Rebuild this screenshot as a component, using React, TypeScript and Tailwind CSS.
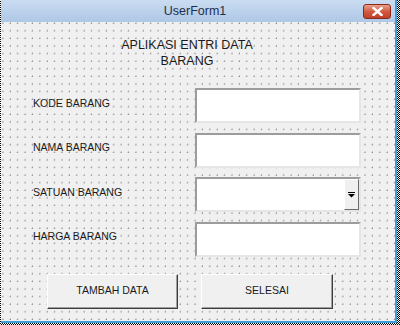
import React from 'react';

const font = { fontFamily: '"Liberation Sans", Arial, sans-serif' };

function TextBox({ combo = false }: { combo?: boolean }) {
  return (
    <div className="flex h-[35px] w-[166px] border-2 border-t-[#9c9c9c] border-l-[#9c9c9c] border-b-[#e6e6e6] border-r-[#e6e6e6] bg-white">
      <div className="flex-1" />
      {combo && (
        <div className="flex w-[15px] items-center justify-center border border-t-white border-l-white border-b-[#6b6b6b] border-r-[#6b6b6b] bg-[#f0f0f0]">
          <svg width="7" height="6" viewBox="0 0 7 6">
            <rect x="0" y="0" width="7" height="1" fill="#000" />
            <polygon points="0,2 7,2 3.5,5.5" fill="#000" />
          </svg>
        </div>
      )}
    </div>
  );
}

function Field({ label, combo }: { label: string; combo?: boolean }) {
  return (
    <div className="flex h-[35px] items-center">
      <div className="w-[194px] pl-[32px] pb-[4px] text-[10.5px] text-[#1a1a1a]">{label}</div>
      <TextBox combo={combo} />
    </div>
  );
}

function FormButton({ children, className }: { children: React.ReactNode; className?: string }) {
  return (
    <div
      className={`flex h-[35px] items-center justify-center border border-t-white border-l-white border-b-[#3c3c3c] border-r-[#3c3c3c] bg-[#f0f0f0] text-[10.5px] text-[#1a1a1a] shadow-[inset_-1px_-1px_0_#a0a0a0] ${className ?? ''}`}
    >
      {children}
    </div>
  );
}

export default function App() {
  return (
    <div
      className="flex h-[325px] w-[400px] bg-[repeating-conic-gradient(#000_0_25%,#fff_0_50%)] bg-[length:2px_2px]"
      style={font}
    >
      <div className="ml-[1px] flex h-[323px] w-[396px] flex-col border-r-2 border-b-2 border-[#3b9fd9] bg-[#f0f0f0]">
        {/* title bar */}
        <div className="flex h-[22px] items-center bg-gradient-to-b from-[#cadcf1] to-[#aec8e7]">
          <div className="flex-1 pl-[26px] text-center text-[12.5px] text-[#1f2f4a]">UserForm1</div>
          <div className="mr-[4px] flex h-[15px] w-[28px] items-center justify-center rounded-[3px] border border-[#8a2a1a] bg-gradient-to-b from-[#e7a18f] via-[#d25a40] to-[#c0402a]">
            <svg width="11" height="9" viewBox="0 0 11 9">
              <path d="M1.5 1 L9.5 8 M9.5 1 L1.5 8" stroke="#fff" strokeWidth="2.4" strokeLinecap="square" />
            </svg>
          </div>
        </div>

        {/* body */}
        <div className="flex-1 bg-[radial-gradient(circle_at_1px_1px,#7a7a7a_0.55px,transparent_0.75px)] bg-[length:7.4px_7.6px] bg-[position:8px_0px]">
          <div className="ml-[100px] w-[172px] pt-[15px] text-center text-[12.5px] leading-[16px] text-[#1a1a1a]">
            APLIKASI ENTRI DATA
            <br />
            BARANG
          </div>

          <div className="mt-[19px] flex flex-col gap-[9.5px]">
            <Field label="KODE BARANG" />
            <Field label="NAMA BARANG" />
            <Field label="SATUAN BARANG" combo />
            <Field label="HARGA BARANG" />
          </div>

          <div className="mt-[17px] flex">
            <FormButton className="ml-[46px] w-[131px]">TAMBAH DATA</FormButton>
            <FormButton className="ml-[23px] w-[132px]">SELESAI</FormButton>
          </div>
        </div>
      </div>
    </div>
  );
}
